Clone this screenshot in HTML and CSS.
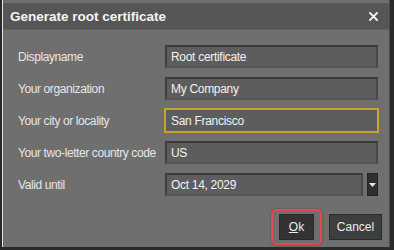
FILE: index.html
```html
<!DOCTYPE html>
<html>
<head>
<meta charset="utf-8">
<link rel="stylesheet" href="styles.css">
</head>
<body>
<div class="dialog">
  <div class="titlebar">
    <span class="title">Generate root certificate</span>
    <svg class="close" width="9" height="9" viewBox="0 0 9 9"><path d="M1 1 L8 8 M8 1 L1 8" stroke="#f2f2f2" stroke-width="1.9" stroke-linecap="square"/></svg>
  </div>
  <div class="form">
    <label class="label">Displayname</label>
    <div class="field"><div class="input">Root certificate</div></div>
    <label class="label">Your organization</label>
    <div class="field"><div class="input">My Company</div></div>
    <label class="label">Your city or locality</label>
    <div class="field"><div class="input focused">San Francisco</div></div>
    <label class="label">Your two-letter country code</label>
    <div class="field"><div class="input">US</div></div>
    <label class="label">Valid until</label>
    <div class="field date">
      <div class="input">Oct 14, 2029</div>
      <div class="drop"><svg width="7" height="4" viewBox="0 0 7 4"><path d="M0 0 H7 L3.5 4 Z" fill="#e8e8e8"/></svg></div>
    </div>
  </div>
  <div class="buttons">
    <div class="btn ok"><span class="u">O</span>k</div>
    <div class="btn cancel">Cancel</div>
  </div>
</div>
</body>
</html>
```
FILE: styles.css
```css
html, body {
  margin: 0;
  padding: 0;
  background: #2a2a2a;
  width: 394px;
  height: 250px;
  overflow: hidden;
}
.dialog {
  margin-left: 2px;
  width: 388px;
  height: 247px;
  background: #6f6f6f;
  border-left: 1px solid #e6e6e6;
  border-right: 1px solid #4a4a4a;
  box-sizing: border-box;
  display: flex;
  flex-direction: column;
  font-family: "Liberation Sans", Arial, sans-serif;
  color: #ececec;
}
.titlebar {
  margin: 3px 0 0 0;
  height: 27px;
  background: #565656;
  border-bottom: 1px solid #606060;
  display: flex;
  align-items: center;
  justify-content: space-between;
  padding: 0 11px 0 7px;
  box-sizing: border-box;
}
.title {
  font-weight: bold;
  font-size: 13.5px;
  color: #f4f4f4;
}
.close { display: block; }
.form {
  display: grid;
  grid-template-columns: 147px 213px;
  row-gap: 9px;
  padding: 15px 0 0 15px;
  align-items: center;
}
.label {
  font-size: 12px;
  letter-spacing: -0.4px;
  white-space: nowrap;
  color: #e6e6e6;
}
.field { display: flex; gap: 4px; }
.input {
  flex: 1;
  height: 23px;
  box-sizing: border-box;
  background: #5d5d5d;
  border: 2px solid #474747;
  border-top-color: #3a3a3a;
  border-left-color: #3e3e3e;
  border-bottom-color: #575757;
  font-size: 12px;
  letter-spacing: -0.3px;
  color: #f2f2f2;
  padding-left: 4px;
  display: flex;
  align-items: center;
}
.input.focused {
  border: 2px solid #c9a227;
  height: 25px;
  margin: -1px -1px;
  padding-left: 5px;
}
.drop {
  width: 11px;
  height: 23px;
  box-sizing: border-box;
  background: #2f2f2f;
  border: 1px solid #222;
  display: flex;
  align-items: center;
  justify-content: center;
}
.buttons {
  display: flex;
  justify-content: flex-end;
  gap: 15px;
  padding: 18px 7px 0 0;
}
.btn {
  height: 26px;
  box-sizing: border-box;
  display: flex;
  align-items: center;
  justify-content: center;
  font-size: 12px;
  color: #ececec;
  border: 1px solid #2b2b2b;
}
.ok {
  width: 35px;
  background: #333333;
  position: relative;
}
.ok::after {
  content: "";
  position: absolute;
  left: -9px;
  right: -9px;
  top: -6px;
  bottom: -6px;
  border: 2px solid #e5484d;
  border-radius: 5px;
  box-shadow: 0 0 2px rgba(0,0,0,0.4);
}
.u { text-decoration: underline; }
.cancel {
  width: 53px;
  background: #3e3e3e;
}
```
